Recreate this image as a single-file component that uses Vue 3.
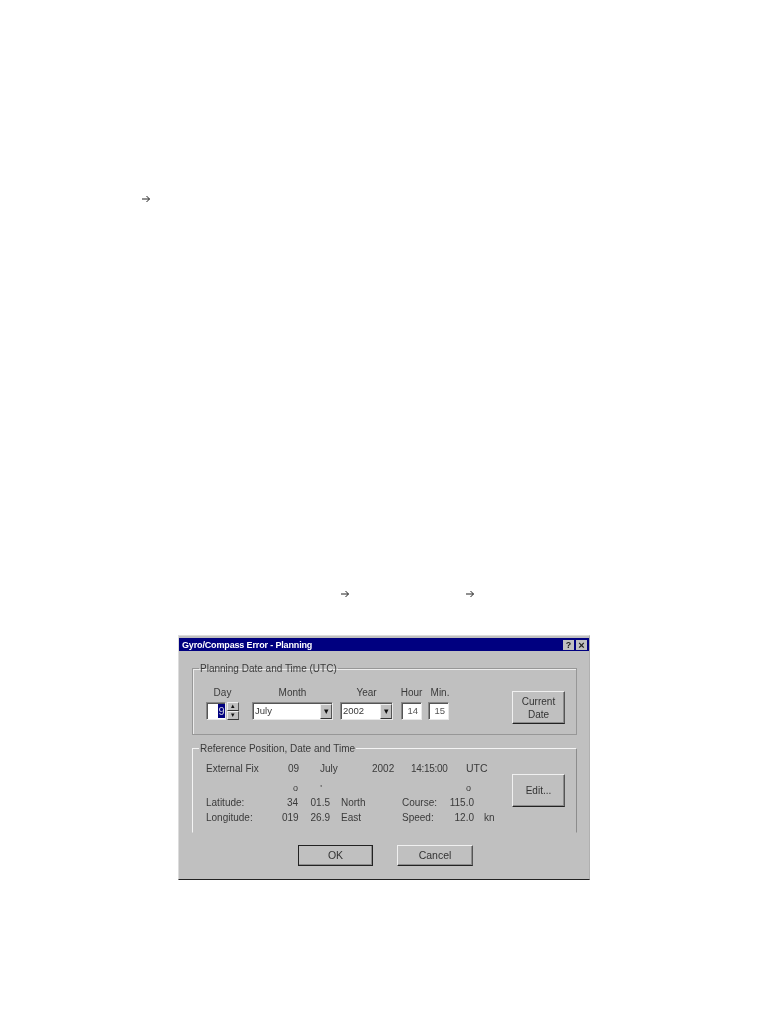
<script setup>
const infoRows = [
  { id: 'deg', cells: ['', 'o', "'", '', '', 'o', ''] },
  { id: 'lat', cells: ['Latitude:', '34', '01.5', 'North', 'Course:', '115.0', ''] },
  { id: 'lon', cells: ['Longitude:', '019', '26.9', 'East', 'Speed:', '12.0', 'kn'] },
]
</script>

<template>
  <div class="page">
    <div class="arrow-row first">
      <svg class="arrow" viewBox="0 0 10 10"><path d="M0 5H7.5M4.5 2L7.5 5L4.5 8" /></svg>
    </div>
    <div class="arrow-row second">
      <svg class="arrow" viewBox="0 0 10 10"><path d="M0 5H7.5M4.5 2L7.5 5L4.5 8" /></svg>
      <svg class="arrow" viewBox="0 0 10 10"><path d="M0 5H7.5M4.5 2L7.5 5L4.5 8" /></svg>
    </div>

    <div class="dialog">
      <div class="titlebar">
        <span class="title">Gyro/Compass Error - Planning</span>
        <span class="title-btn">?</span>
        <span class="title-btn close">×</span>
      </div>

      <fieldset class="group planning">
        <legend>Planning Date and Time (UTC)</legend>
        <div class="date-grid">
          <span class="cap col-day">Day</span>
          <span class="cap col-month">Month</span>
          <span class="cap col-year">Year</span>
          <span class="cap col-num">Hour</span>
          <span class="cap col-num min-cap">Min.</span>
          <button class="btn current">Current<br />Date</button>

          <div class="day-field col-day">
            <div class="field day"><span class="selected">9</span></div>
            <div class="spin">
              <span class="spin-btn">▴</span>
              <span class="spin-btn">▾</span>
            </div>
          </div>
          <div class="field combo col-month">
            <span class="combo-text">July</span>
            <span class="combo-arrow">▾</span>
          </div>
          <div class="field combo col-year">
            <span class="combo-text">2002</span>
            <span class="combo-arrow">▾</span>
          </div>
          <div class="field num col-num">14</div>
          <div class="field num col-num">15</div>
        </div>
      </fieldset>

      <fieldset class="group reference">
        <legend>Reference Position, Date and Time</legend>
        <div class="ref-body">
          <div class="info">
            <div class="fix-row">
              <span>External Fix</span>
              <span>09</span>
              <span>July</span>
              <span>2002</span>
              <span class="time">14:15:00</span>
              <span class="utc">UTC</span>
            </div>
            <div v-for="row in infoRows" :key="row.id" class="pos-row" :class="row.id">
              <span v-for="(cell, i) in row.cells" :key="i" class="cell">{{ cell }}</span>
            </div>
          </div>
          <button class="btn edit">Edit...</button>
        </div>
      </fieldset>

      <div class="footer">
        <button class="btn ok">OK</button>
        <button class="btn cancel">Cancel</button>
      </div>
    </div>
  </div>
</template>

<style scoped>
.page {
  width: 768px;
  height: 1024px;
  background: #fff;
  padding-top: 194px;
  box-sizing: border-box;
  overflow: hidden;
  font-family: "Liberation Sans", Arial, sans-serif;
}

.arrow-row {
  display: flex;
  height: 10px;
}
.arrow-row.first {
  padding-left: 142px;
}
.arrow-row.second {
  margin-top: 385px;
  padding-left: 341px;
  gap: 115px;
}
.arrow {
  width: 10px;
  height: 10px;
}
.arrow path {
  fill: none;
  stroke: #222;
  stroke-width: 1;
}

.dialog {
  width: 412px;
  height: 245px;
  margin: 36px 0 0 178px;
  box-sizing: border-box;
  padding-top: 2px;
  background: #c0c0c0;
  border-top: 1px solid #dcdcdc;
  border-left: 1px solid #dcdcdc;
  border-right: 1px solid #b0b0b0;
  border-bottom: 1px solid #222;
  color: #3a3a3a;
  font-size: 10px;
  filter: blur(0.45px);
}

.titlebar {
  height: 13px;
  display: flex;
  align-items: center;
  gap: 2px;
  padding: 0 2px 0 3px;
  background: #000080;
  color: #fff;
}
.title {
  flex: 1;
  font-size: 9px;
  font-weight: 700;
  letter-spacing: -0.15px;
}
.title-btn {
  width: 11px;
  height: 10px;
  background: #c0c0c0;
  color: #222;
  font-size: 9px;
  font-weight: 700;
  line-height: 10px;
  text-align: center;
}
.title-btn.close {
  font-size: 11px;
}

.group {
  margin: 0 12px 0 13px;
  min-width: 0;
  padding: 0;
}
.group legend {
  margin-left: -7px;
  padding: 0 1px;
  height: 14px;
  line-height: 16px;
  font-size: 10px;
}

.planning {
  margin-top: 10px;
  padding: 10px 0 14px 13px;
  border: 1px solid #979797;
  box-shadow: inset 1px 1px 0 #ececec;
}
.date-grid {
  display: grid;
  grid-template-columns: 46px 88px 61px 27px 84px 53px;
  grid-template-rows: 17px 18px;
}
.col-day {
  width: 33px;
}
.col-month {
  width: 81px;
}
.col-year {
  width: 53px;
}
.col-num {
  width: 21px;
}
.cap {
  text-align: center;
  line-height: 15px;
  white-space: nowrap;
}
.cap.col-num {
  display: flex;
  justify-content: center;
}
.min-cap {
  padding-left: 3px;
  box-sizing: border-box;
}
.btn {
  font-family: inherit;
  font-size: 10px;
  color: #333;
  padding: 0;
  background: #c0c0c0;
  border: 1px solid;
  border-color: #f0f0f0 #555 #222 #f0f0f0;
  box-shadow: inset -1px -1px 0 #8c8c8c;
  line-height: 13px;
}
.current {
  grid-column: 6;
  grid-row: 1 / span 2;
  margin-top: 6px;
  width: 53px;
  height: 33px;
}

.field {
  box-sizing: border-box;
  height: 18px;
  background: #fff;
  border: 1px solid;
  border-color: #888 #e8e8e8 #e8e8e8 #888;
  box-shadow: inset 1px 1px 0 #555;
  font-size: 9.5px;
  line-height: 16px;
}
.day-field {
  display: flex;
  gap: 1px;
}
.day {
  width: 20px;
  display: flex;
  justify-content: flex-end;
  padding: 1px 0 1px 0;
}
.selected {
  width: 7px;
  background: #000080;
  color: #ccd;
  font-size: 11px;
  line-height: 14px;
  text-align: center;
}
.spin {
  display: flex;
  flex-direction: column;
  width: 12px;
}
.spin-btn {
  height: 9px;
  background: #c0c0c0;
  border: 1px solid;
  border-color: #eee #555 #333 #eee;
  box-sizing: border-box;
  font-size: 7px;
  line-height: 6px;
  text-align: center;
  color: #111;
}
.combo {
  display: flex;
  align-items: center;
  padding: 1px 0 1px 2px;
}
.combo-text {
  flex: 1;
}
.combo-arrow {
  width: 12px;
  height: 15px;
  box-sizing: border-box;
  background: #c0c0c0;
  border: 1px solid;
  border-color: #eee #555 #333 #eee;
  color: #111;
  font-size: 9px;
  line-height: 12px;
  text-align: center;
}
.num {
  padding-right: 3px;
  text-align: right;
  color: #555;
}

.reference {
  margin-top: 6px;
  padding: 6px 0 7px 13px;
  border: 1px solid #f4f4f4;
  border-right-color: #8c8c8c;
  border-bottom-color: transparent;
}
.ref-body {
  display: flex;
}
.info {
  width: 306px;
  font-size: 10px;
  line-height: 15px;
}
.fix-row {
  display: grid;
  grid-template-columns: 82px 32px 52px 39px 55px auto;
  height: 15px;
  margin-bottom: 5px;
}
.time {
  letter-spacing: -0.3px;
}
.utc {
  font-size: 10.5px;
}
.pos-row {
  display: grid;
  grid-template-columns: 76px 16px 32px 72px 36px 36px auto;
  height: 15px;
}
.cell:nth-child(2),
.cell:nth-child(3),
.cell:nth-child(6) {
  text-align: right;
}
.cell:nth-child(4) {
  padding-left: 11px;
}
.cell:nth-child(7) {
  padding-left: 10px;
}
.pos-row.deg {
  height: 14px;
  line-height: 14px;
  font-size: 9px;
}
.pos-row.deg .cell:nth-child(3) {
  padding-right: 8px;
}
.pos-row.deg .cell:nth-child(6) {
  padding-right: 3px;
}
.edit {
  margin-top: 13px;
  width: 53px;
  height: 33px;
}

.footer {
  display: flex;
  gap: 24px;
  margin-top: 12px;
  padding-left: 119px;
}
.ok,
.cancel {
  height: 21px;
  font-size: 10.5px;
}
.ok {
  width: 75px;
  border-color: #222;
}
.cancel {
  width: 76px;
}
</style>
